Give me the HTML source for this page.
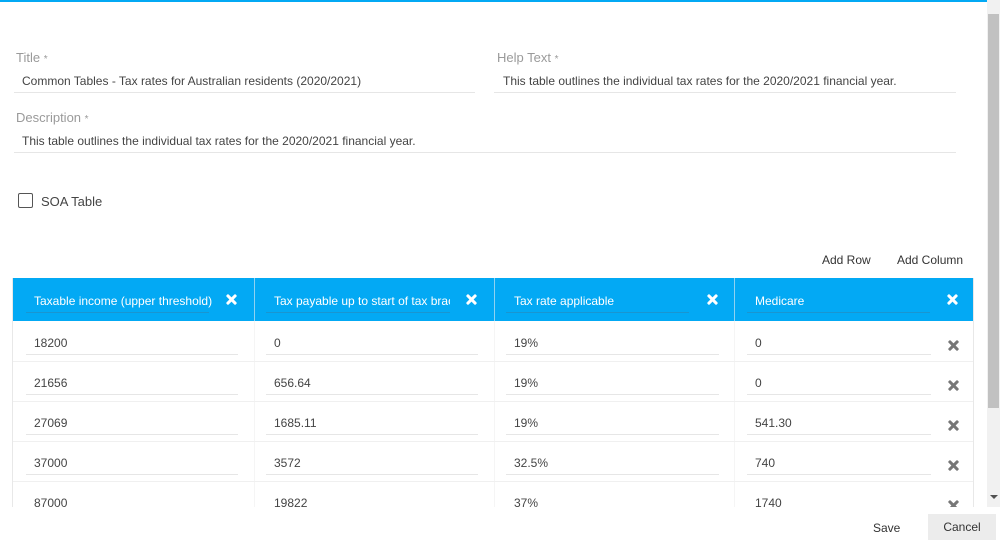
<!DOCTYPE html>
<html><head><style>
*{box-sizing:border-box;margin:0;padding:0}
body{width:1000px;height:540px;overflow:hidden;background:#fff;font-family:"Liberation Sans",sans-serif;position:relative;color:#444}
.a{position:absolute}
.lbl{font-size:13px;color:#9a9a9a}
.val{font-size:12px;color:#444}
.ul{height:1px;background:#e6e6e6}
.x{position:absolute;width:11px;height:11px}
.x:before,.x:after{content:"";position:absolute;left:4px;top:-1px;width:3px;height:13px;background:currentColor;border-radius:1px}
.x:before{transform:rotate(45deg)}.x:after{transform:rotate(-45deg)}
</style></head><body>
<div class="a" style="left:0;top:0;width:1000px;height:2px;background:#03a9f4"></div>
<div class="a lbl" style="left:16px;top:50px">Title <span style="font-size:10px">*</span></div>
<div class="a val" style="left:22px;top:74px">Common Tables - Tax rates for Australian residents (2020/2021)</div>
<div class="a ul" style="left:14px;top:92px;width:461px"></div>
<div class="a lbl" style="left:497px;top:50px">Help Text <span style="font-size:10px">*</span></div>
<div class="a val" style="left:503px;top:74px">This table outlines the individual tax rates for the 2020/2021 financial year.</div>
<div class="a ul" style="left:494px;top:92px;width:462px"></div>
<div class="a lbl" style="left:16px;top:110px">Description <span style="font-size:10px">*</span></div>
<div class="a val" style="left:22px;top:134px">This table outlines the individual tax rates for the 2020/2021 financial year.</div>
<div class="a ul" style="left:14px;top:152px;width:942px"></div>
<div class="a" style="left:18px;top:193px;width:15px;height:15px;border:1.5px solid #555;border-radius:2px"></div>
<div class="a" style="left:41px;top:194px;font-size:13px;color:#444">SOA Table</div>
<div class="a" style="left:822px;top:253px;font-size:12px;color:#333">Add Row</div>
<div class="a" style="left:897px;top:253px;font-size:12px;color:#333">Add Column</div>

<div class="a" style="left:12px;top:278px;width:962px;height:229px;border-left:1px solid #e8e8e8;border-right:1px solid #e8e8e8;overflow:hidden">
<div class="a" style="left:0;top:0;width:962px;height:43px;background:#03a9f4"></div>
<div class="a" style="left:241px;top:0;width:1px;height:229px;background:#eee;opacity:.6"></div>
<div class="a" style="left:481px;top:0;width:1px;height:229px;background:#eee;opacity:.6"></div>
<div class="a" style="left:721px;top:0;width:1px;height:229px;background:#eee;opacity:.6"></div>
</div>
<div class="a" style="left:34px;top:294px;font-size:12px;color:#fff">Taxable income (upper threshold)</div>
<div class="a" style="left:26px;top:312px;width:183px;height:1px;background:#1a95d0"></div>
<div class="x" style="left:226px;top:294px;color:#fff"></div>
<div class="a" style="left:274px;top:294px;font-size:12px;color:#fff;width:176px;overflow:hidden;white-space:nowrap">Tax payable up to start of tax bracket</div>
<div class="a" style="left:266px;top:312px;width:184px;height:1px;background:#1a95d0"></div>
<div class="x" style="left:466px;top:294px;color:#fff"></div>
<div class="a" style="left:514px;top:294px;font-size:12px;color:#fff">Tax rate applicable</div>
<div class="a" style="left:506px;top:312px;width:183px;height:1px;background:#1a95d0"></div>
<div class="x" style="left:707px;top:294px;color:#fff"></div>
<div class="a" style="left:755px;top:294px;font-size:12px;color:#fff">Medicare</div>
<div class="a" style="left:747px;top:312px;width:183px;height:1px;background:#1a95d0"></div>
<div class="x" style="left:947px;top:294px;color:#fff"></div>

<div id="rows"></div>
<script>
var d=[["18200","0","19%","0"],["21656","656.64","19%","0"],["27069","1685.11","19%","541.30"],["37000","3572","32.5%","740"],["87000","19822","37%","1740"]];
var h="";var xs=[26,266,506,747],ws=[212,212,213,184];
d.forEach(function(r,i){var y=321+i*40;
 if(y+40<507)h+='<div class="a" style="left:13px;top:'+(y+40)+'px;width:960px;height:1px;background:#f0f0f0"></div>';
 r.forEach(function(v,j){h+='<div class="a val" style="left:'+(xs[j]+8)+'px;top:'+(y+15)+'px">'+v+'</div>';
 if(y+34<507)h+='<div class="a ul" style="left:'+xs[j]+'px;top:'+(y+33)+'px;width:'+ws[j]+'px"></div>';});
 if(y+19<507)h+='<div class="x" style="left:948px;top:'+(y+19)+'px;color:#777;clip-path:inset(0 0 '+Math.max(0,y+30-507)+'px 0)"></div>';
});
document.getElementById("rows").innerHTML=h;
</script>
<div class="a" style="left:0;top:507px;width:1000px;height:33px;background:#fff"></div>
<div class="a" style="left:987px;top:0;width:13px;height:507px;background:#f1f1f1"></div>
<div class="a" style="left:988px;top:14px;width:11px;height:394px;background:#c1c1c1"></div>
<div class="a" style="left:990px;top:495px;width:0;height:0;border-left:4px solid transparent;border-right:4px solid transparent;border-top:4px solid #505050"></div>
<div class="a" style="left:873px;top:521px;font-size:12px;color:#333">Save</div>
<div class="a" style="left:928px;top:514px;width:68px;height:26px;background:#ececec;font-size:12px;color:#333;text-align:center;line-height:27px">Cancel</div>
</body></html>
